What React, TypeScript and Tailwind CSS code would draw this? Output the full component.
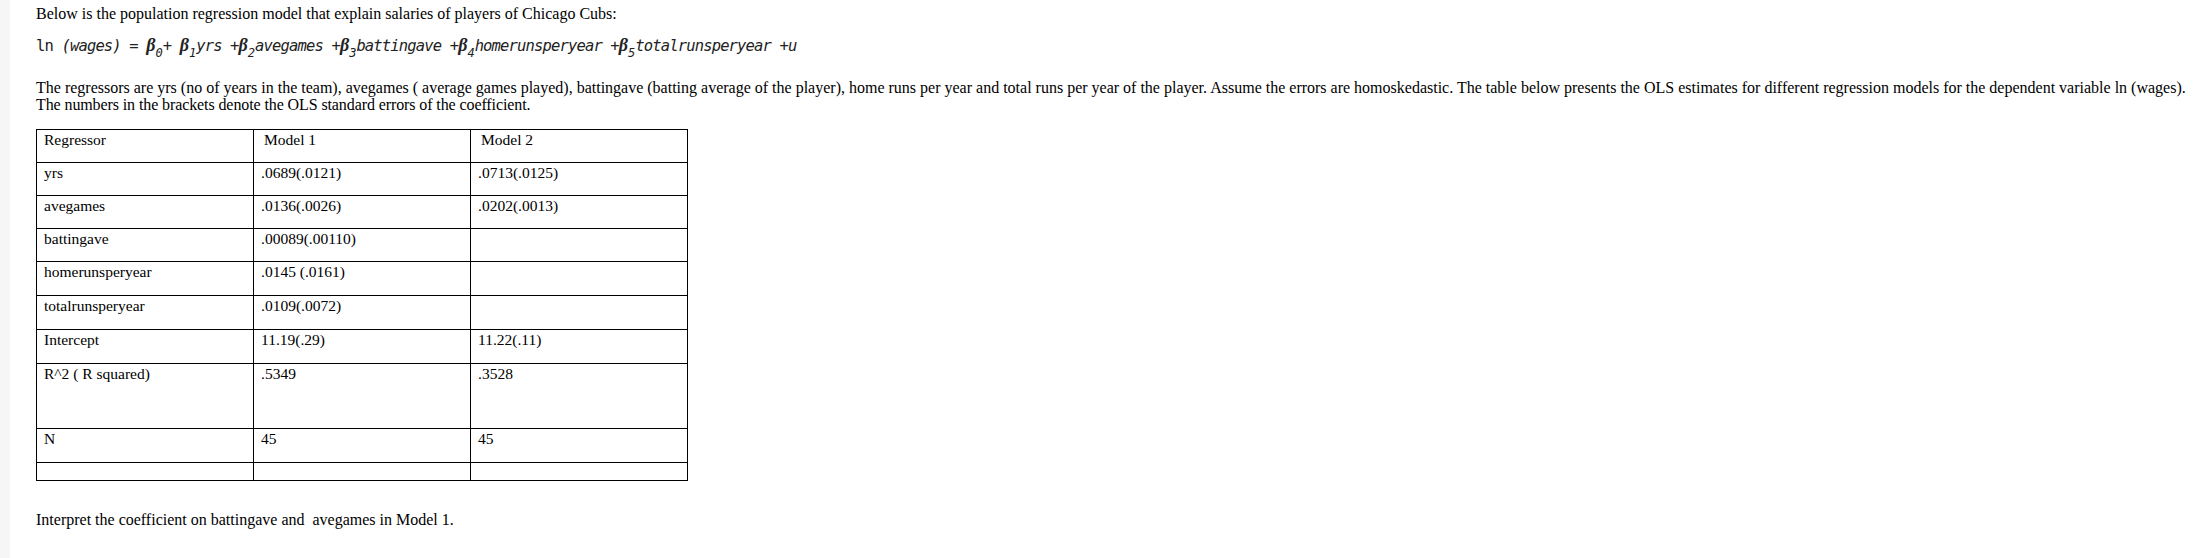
import React from 'react';

const rows: { label: string; m1: string; m2: string; h: string }[] = [
  { label: 'yrs', m1: '.0689(.0121)', m2: '.0713(.0125)', h: 'h-[33px]' },
  { label: 'avegames', m1: '.0136(.0026)', m2: '.0202(.0013)', h: 'h-[33px]' },
  { label: 'battingave', m1: '.00089(.00110)', m2: '', h: 'h-[33px]' },
  { label: 'homerunsperyear', m1: '.0145 (.0161)', m2: '', h: 'h-[34px]' },
  { label: 'totalrunsperyear', m1: '.0109(.0072)', m2: '', h: 'h-[34px]' },
  { label: 'Intercept', m1: '11.19(.29)', m2: '11.22(.11)', h: 'h-[34px]' },
  { label: 'R^2 ( R squared)', m1: '.5349', m2: '.3528', h: 'h-[65px]' },
  { label: 'N', m1: '45', m2: '45', h: 'h-[34px]' },
  { label: '', m1: '', m2: '', h: 'h-[18px]' },
];

const Beta = ({ n }: { n: number }) => (
  <span className="font-['Liberation_Serif',serif] font-bold italic text-[18px] tracking-normal">
    β<sub className="text-[12px] font-normal italic font-['DejaVu_Sans_Mono',monospace] align-[-3px]">{n}</sub>
  </span>
);

export default function App() {
  const cell = 'border border-black align-top pt-[1px] px-[7px] w-[217px]';
  return (
    <div className="min-h-screen bg-white flex font-['Liberation_Serif',serif] text-black">
      <div className="w-[10px] bg-[#f6f6f6] shrink-0" />
      <div className="pl-[26px] pt-[5px]">
        <p className="text-[16px] leading-[17px]">
          Below is the population regression model that explain salaries of players of Chicago Cubs:
        </p>
        <p className="mt-[12px] leading-[22px] text-[15.5px] tracking-[-0.85px] text-[#222] font-['DejaVu_Sans_Mono',monospace] whitespace-nowrap">
          <span>ln</span> <span className="italic">(wages)</span> = <Beta n={0} />+ <Beta n={1} />
          <span className="italic">yrs</span> +<Beta n={2} />
          <span className="italic">avegames</span> +<Beta n={3} />
          <span className="italic">battingave</span> +<Beta n={4} />
          <span className="italic">homerunsperyear</span> +<Beta n={5} />
          <span className="italic">totalrunsperyear</span> +<span className="italic">u</span>
        </p>
        <div className="mt-[22px] text-[16px] leading-[17px] whitespace-nowrap">
          <p>
            The regressors are yrs (no of years in the team), avegames ( average games played), battingave (batting average of the
            player), home runs per year and total runs per year of the player. Assume the errors are homoskedastic. The table below
            presents the OLS estimates for different regression models for the dependent variable ln (wages).
          </p>
          <p className="tracking-[-0.1px]">The numbers in the brackets denote the OLS standard errors of the coefficient.</p>
        </div>
        <table className="mt-[16px] border-collapse text-[15.5px] leading-[17px]">
          <tbody>
            <tr className="h-[33px]">
              <td className={cell}>Regressor</td>
              <td className={cell + ' pl-[10px]'}>Model 1</td>
              <td className={cell + ' pl-[10px]'}>Model 2</td>
            </tr>
            {rows.map((r, i) => (
              <tr key={i} className={r.h}>
                <td className={cell}>{r.label}</td>
                <td className={cell}>{r.m1}</td>
                <td className={cell}>{r.m2}</td>
              </tr>
            ))}
          </tbody>
        </table>
        <p className="mt-[30px] text-[16px] leading-[17px]">
          Interpret the coefficient on battingave and&nbsp; avegames in Model 1.
        </p>
      </div>
    </div>
  );
}
